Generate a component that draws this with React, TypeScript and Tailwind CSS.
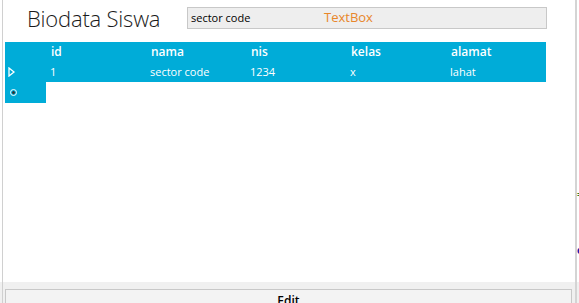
const columns = ["id", "nama", "nis", "kelas", "alamat"];
const rows = [["1", "sector code", "1234", "x", "lahat"]];

export default function App() {
  return (
    <div className="relative h-[303px] w-[579px] overflow-hidden bg-white font-['Open_Sans',sans-serif]">
      {/* left editor edge */}
      <div className="absolute left-[2px] top-0 h-full w-px bg-[#d0d0d0]" />
      {/* right edge + stray editor glyphs */}
      <div className="absolute left-[575px] top-0 h-full w-[2px] bg-[#d4d4d4]" />
      <div className="absolute left-[577px] top-[190px] text-[9px] font-bold leading-none text-[#2a7a2a]">=</div>
      <div className="absolute left-[577px] top-[245px] text-[10px] font-bold leading-none text-[#1a1ab0]">e</div>

      <div className="flex h-[282px] flex-col pl-[5px] pr-[33px]">
        {/* Header */}
        <div className="flex h-[42px] items-start">
          <h1 className="ml-[22px] mt-[3px] w-[138px] shrink-0 whitespace-nowrap text-[22px] font-light leading-[30px] tracking-[-0.2px] text-[#1a1a1a]">
            Biodata Siswa
          </h1>
          <div className="ml-[22px] mt-[7px] flex h-[22px] w-[360px] shrink-0 items-center border border-[#c8c8c8] bg-[#eeeeee] pl-[3px]">
            <span className="w-[133px] whitespace-nowrap text-[11px] text-black">sector code</span>
            <span className="text-[13px] text-[#e8862a]">TextBox</span>
          </div>
        </div>

        {/* Grid */}
        <div className="w-[541px] text-[11px] text-white">
          <div className="flex h-[20px] items-center bg-[#00acd8]">
            <div className="w-[41px]" />
            {columns.map((c) => (
              <div key={c} className="w-[100px] pl-[5px] text-[12px] font-semibold">{c}</div>
            ))}
          </div>
          {rows.map((r, i) => (
            <div key={i} className="flex h-[20px] items-center bg-[#00acd8]">
              <div className="flex w-[41px] items-center pl-[3px]">
                <svg width="8" height="10" viewBox="0 0 8 10">
                  <path d="M1 1 L6 5 L1 9 Z" fill="none" stroke="white" strokeWidth="1.3" />
                </svg>
              </div>
              {r.map((v, j) => (
                <div key={j} className="w-[100px] whitespace-nowrap pl-[4px]">{v}</div>
              ))}
            </div>
          ))}
          <div className="flex h-[21px] w-[41px] items-center bg-[#00acd8] pl-[5px]">
            <div className="flex h-[7px] w-[7px] items-center justify-center rounded-full border border-white">
              <div className="h-[3px] w-[3px] rounded-full bg-[#333]" />
            </div>
          </div>
        </div>
      </div>

      {/* bottom bar */}
      <div className="h-[21px] bg-[#f0f0f0] pl-[5px] pr-[7px] pt-[7px]">
        <div className="flex h-[20px] justify-center border border-b-0 border-[#c8c8c8] bg-[#f3f3f3]">
          <span className="mt-[5px] text-[12px] font-semibold leading-none text-black">Edit</span>
        </div>
      </div>
    </div>
  );
}
